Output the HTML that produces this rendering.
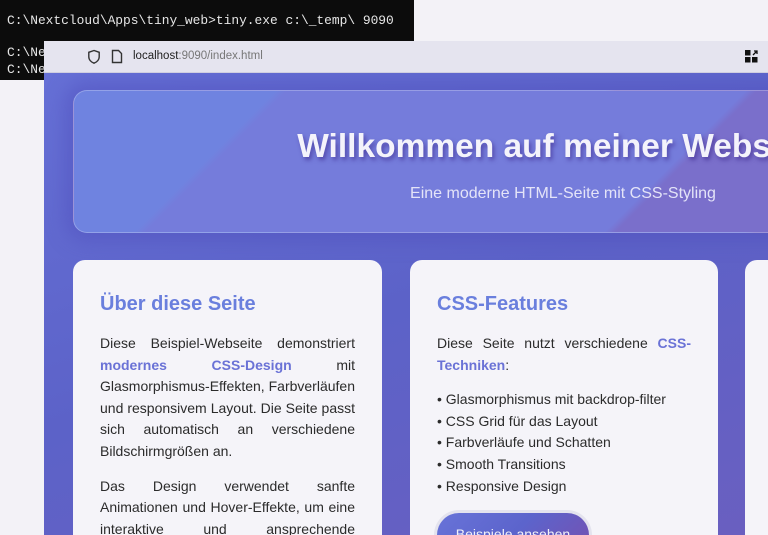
<!DOCTYPE html>
<html><head><meta charset="utf-8"><style>
*{margin:0;padding:0;box-sizing:border-box}
html,body{width:768px;height:535px;overflow:hidden;background:#f3f2f7;position:relative;font-family:"Liberation Sans",sans-serif}
.term{position:absolute;left:0;top:0;width:414px;height:80px;background:#0c0c0c;color:#e6e6e6;font-family:"Liberation Mono",monospace;font-size:12.9px}
.term div{position:absolute;left:7px;white-space:pre}
.win{position:absolute;left:44px;top:41px;width:724px;height:494px;overflow:hidden;background:#5d62c7}
.bar{position:absolute;left:0;top:0;width:100%;height:32px;background:#e5e4ef;border-bottom:1px solid #d0cfe0}
.url{position:absolute;left:89px;top:9px;font-size:11.5px;color:#222}
.url span{color:#777}
.page{position:absolute;left:0;top:32px;width:100%;height:462px;overflow:hidden;background:linear-gradient(160deg,#6670d6 0%,#5c62c8 50%,#6a5fc0 100%)}
.hdr{position:absolute;left:29px;top:17px;width:980px;height:143px;border-radius:14px;background:linear-gradient(135deg,#6f83e0 0%,#6f83e0 18%,#757cdb 19%,#757cdb 60%,#7a6fcb 61%);border:1px solid rgba(255,255,255,.25);box-shadow:0 0 18px 8px rgba(80,80,190,.5)}
.hdr h1{position:absolute;left:0;width:100%;top:37px;text-align:center;color:#f4f3fb;font-size:33.5px;font-weight:bold;text-shadow:2px 3px 4px rgba(60,40,140,.6)}
.hdr p{position:absolute;left:0;width:100%;top:94px;text-align:center;color:#e4e4f8;font-size:16px}
.card{position:absolute;top:187px;height:275px;overflow:hidden;background:#f5f4f9;border-radius:12px 12px 0 0;padding:27px 27px}
.card h2{font-size:20px;color:#6a7fdd;font-weight:bold;margin-top:6px;margin-bottom:17px}
.card p{font-size:14px;line-height:21.6px;color:#2b2b2b;text-align:justify;margin-bottom:13px}
.card b{color:#6a72d6}
ul{list-style:none;font-size:14px;line-height:21.6px;color:#2b2b2b;margin-top:2px}
.btn{position:absolute;left:27px;top:253px;width:152px;height:44px;border-radius:22px;background:linear-gradient(135deg,#6873d8,#5c64cc 50%,#7650b0);color:#f2f2fa;font-size:14px;text-align:center;padding-top:13px;box-shadow:0 0 0 3px #e4e3ee}
</style></head><body>
<div class="term">
<div style="top:13px">C:\Nextcloud\Apps\tiny_web&gt;tiny.exe c:\_temp\ 9090</div>
<div style="top:45px">C:\Ne</div>
<div style="top:62px">C:\Ne</div>
</div>
<div class="win">
<div class="bar">
<svg style="position:absolute;left:43px;top:8px" width="14" height="16" viewBox="0 0 14 16"><path d="M7 1.5L1.8 3.3v4.4c0 3 2.3 5.4 5.2 6.5 2.9-1.1 5.2-3.5 5.2-6.5V3.3z" fill="none" stroke="#333" stroke-width="1.4"/></svg>
<svg style="position:absolute;left:67px;top:8px" width="12" height="15" viewBox="0 0 12 15"><path d="M1.5 1.5h6l3 3v9h-9z" fill="none" stroke="#333" stroke-width="1.4"/></svg>
<div class="url">localhost<span>:9090/index.html</span></div>
<svg style="position:absolute;left:701px;top:9px" width="13" height="13" viewBox="0 0 13 13"><rect x="0" y="0" width="5.5" height="5.5" fill="#111"/><rect x="0" y="7" width="5.5" height="5.5" fill="#111"/><rect x="7" y="7" width="5.5" height="5.5" fill="#111"/><path d="M8 5L12 1M9 1h3v3" stroke="#111" stroke-width="1.3" fill="none"/></svg>
</div>
<div class="page">
<div class="hdr"><h1>Willkommen auf meiner Webseite</h1><p>Eine moderne HTML-Seite mit CSS-Styling</p></div>
<div class="card" style="left:29px;width:309px">
<h2>Über diese Seite</h2>
<p>Diese Beispiel-Webseite demonstriert <b>modernes CSS-Design</b> mit Glasmorphismus-Effekten, Farbverläufen und responsivem Layout. Die Seite passt sich automatisch an verschiedene Bildschirmgrößen an.</p>
<p>Das Design verwendet sanfte Animationen und Hover-Effekte, um eine interaktive und ansprechende Benutzererfahrung zu schaffen.</p>
</div>
<div class="card" style="left:366px;width:308px">
<h2>CSS-Features</h2>
<p>Diese Seite nutzt verschiedene <b>CSS-Techniken</b>:</p>
<ul><li>• Glasmorphismus mit backdrop-filter</li><li>• CSS Grid für das Layout</li><li>• Farbverläufe und Schatten</li><li>• Smooth Transitions</li><li>• Responsive Design</li></ul>
<div class="btn">Beispiele ansehen</div>
</div>
<div class="card" style="left:701px;width:308px"></div>
</div>
</div>
</body></html>
